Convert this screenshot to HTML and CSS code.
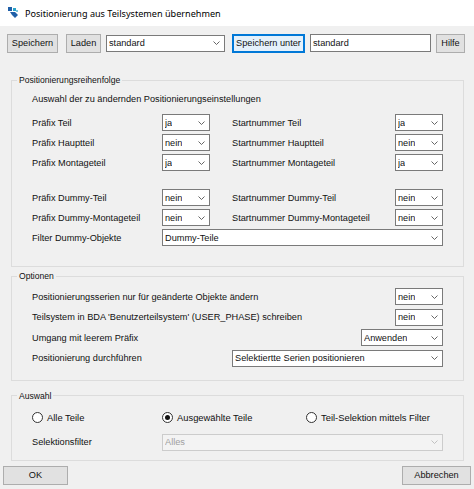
FILE: index.html
```html
<!DOCTYPE html>
<html lang="de">
<head>
<meta charset="utf-8">
<title>Positionierung aus Teilsystemen übernehmen</title>
<link rel="stylesheet" href="styles.css">
</head>
<body>
<div class="window">
  <div class="titlebar">
    <svg class="app-icon" width="11" height="11" viewBox="0 0 11 11">
      <rect x="0" y="0" width="4" height="4" fill="#1f5fa8"/>
      <rect x="5" y="1" width="3" height="3" fill="#2aa3c9"/>
      <path d="M2 5 L7 5 L10 8 L7 11 L4 8 Z" fill="#1f5fa8"/>
      <rect x="8" y="3" width="2" height="2" fill="#7cc6de"/>
    </svg>
    <span class="title">Positionierung aus Teilsystemen übernehmen</span>
  </div>

  <div class="toolbar">
    <button class="btn btn-save">Speichern</button>
    <button class="btn btn-load">Laden</button>
    <div class="combo combo-preset"><span>standard</span><svg class="chev" width="7" height="4" viewBox="0 0 7 4"><path d="M0.5 0.5 L3.5 3.5 L6.5 0.5" fill="none" stroke="#555" stroke-width="0.9"/></svg></div>
    <button class="btn btn-focus btn-saveas">Speichern unter</button>
    <div class="textbox">standard</div>
    <button class="btn btn-help">Hilfe</button>
  </div>

  <fieldset class="group group-order">
    <legend>Positionierungsreihenfolge</legend>
    <div class="group-body">
      <div class="intro">Auswahl der zu ändernden Positionierungseinstellungen</div>
      <div class="order-grid">
        <span class="lbl">Präfix Teil</span>
        <div class="combo"><span>ja</span><svg class="chev" width="7" height="4" viewBox="0 0 7 4"><path d="M0.5 0.5 L3.5 3.5 L6.5 0.5" fill="none" stroke="#555" stroke-width="0.9"/></svg></div>
        <span class="lbl lbl-2">Startnummer Teil</span>
        <div class="combo"><span>ja</span><svg class="chev" width="7" height="4" viewBox="0 0 7 4"><path d="M0.5 0.5 L3.5 3.5 L6.5 0.5" fill="none" stroke="#555" stroke-width="0.9"/></svg></div>

        <span class="lbl">Präfix Hauptteil</span>
        <div class="combo"><span>nein</span><svg class="chev" width="7" height="4" viewBox="0 0 7 4"><path d="M0.5 0.5 L3.5 3.5 L6.5 0.5" fill="none" stroke="#555" stroke-width="0.9"/></svg></div>
        <span class="lbl lbl-2">Startnummer Hauptteil</span>
        <div class="combo"><span>nein</span><svg class="chev" width="7" height="4" viewBox="0 0 7 4"><path d="M0.5 0.5 L3.5 3.5 L6.5 0.5" fill="none" stroke="#555" stroke-width="0.9"/></svg></div>

        <span class="lbl">Präfix Montageteil</span>
        <div class="combo"><span>ja</span><svg class="chev" width="7" height="4" viewBox="0 0 7 4"><path d="M0.5 0.5 L3.5 3.5 L6.5 0.5" fill="none" stroke="#555" stroke-width="0.9"/></svg></div>
        <span class="lbl lbl-2">Startnummer Montageteil</span>
        <div class="combo"><span>ja</span><svg class="chev" width="7" height="4" viewBox="0 0 7 4"><path d="M0.5 0.5 L3.5 3.5 L6.5 0.5" fill="none" stroke="#555" stroke-width="0.9"/></svg></div>

        <div class="spacer"></div>

        <span class="lbl">Präfix Dummy-Teil</span>
        <div class="combo"><span>nein</span><svg class="chev" width="7" height="4" viewBox="0 0 7 4"><path d="M0.5 0.5 L3.5 3.5 L6.5 0.5" fill="none" stroke="#555" stroke-width="0.9"/></svg></div>
        <span class="lbl lbl-2">Startnummer Dummy-Teil</span>
        <div class="combo"><span>nein</span><svg class="chev" width="7" height="4" viewBox="0 0 7 4"><path d="M0.5 0.5 L3.5 3.5 L6.5 0.5" fill="none" stroke="#555" stroke-width="0.9"/></svg></div>

        <span class="lbl">Präfix Dummy-Montageteil</span>
        <div class="combo"><span>nein</span><svg class="chev" width="7" height="4" viewBox="0 0 7 4"><path d="M0.5 0.5 L3.5 3.5 L6.5 0.5" fill="none" stroke="#555" stroke-width="0.9"/></svg></div>
        <span class="lbl lbl-2">Startnummer Dummy-Montageteil</span>
        <div class="combo"><span>nein</span><svg class="chev" width="7" height="4" viewBox="0 0 7 4"><path d="M0.5 0.5 L3.5 3.5 L6.5 0.5" fill="none" stroke="#555" stroke-width="0.9"/></svg></div>

        <span class="lbl">Filter Dummy-Objekte</span>
        <div class="combo combo-wide"><span>Dummy-Teile</span><svg class="chev" width="7" height="4" viewBox="0 0 7 4"><path d="M0.5 0.5 L3.5 3.5 L6.5 0.5" fill="none" stroke="#555" stroke-width="0.9"/></svg></div>
      </div>
    </div>
  </fieldset>

  <fieldset class="group group-options">
    <legend>Optionen</legend>
    <div class="group-body">
      <div class="options-grid">
        <span class="lbl">Positionierungsserien nur für geänderte Objekte ändern</span>
        <div class="combo combo-yn"><span>nein</span><svg class="chev" width="7" height="4" viewBox="0 0 7 4"><path d="M0.5 0.5 L3.5 3.5 L6.5 0.5" fill="none" stroke="#555" stroke-width="0.9"/></svg></div>

        <span class="lbl">Teilsystem in BDA 'Benutzerteilsystem' (USER_PHASE) schreiben</span>
        <div class="combo combo-yn"><span>nein</span><svg class="chev" width="7" height="4" viewBox="0 0 7 4"><path d="M0.5 0.5 L3.5 3.5 L6.5 0.5" fill="none" stroke="#555" stroke-width="0.9"/></svg></div>

        <span class="lbl">Umgang mit leerem Präfix</span>
        <div class="combo combo-apply"><span>Anwenden</span><svg class="chev" width="7" height="4" viewBox="0 0 7 4"><path d="M0.5 0.5 L3.5 3.5 L6.5 0.5" fill="none" stroke="#555" stroke-width="0.9"/></svg></div>

        <span class="lbl">Positionierung durchführen</span>
        <div class="combo combo-mode"><span>Selektiertte Serien positionieren</span><svg class="chev" width="7" height="4" viewBox="0 0 7 4"><path d="M0.5 0.5 L3.5 3.5 L6.5 0.5" fill="none" stroke="#555" stroke-width="0.9"/></svg></div>
      </div>
    </div>
  </fieldset>

  <fieldset class="group group-select">
    <legend>Auswahl</legend>
    <div class="group-body">
      <div class="radio-row">
        <label class="radio radio-all"><span class="dot"></span>Alle Teile</label>
        <label class="radio radio-sel"><span class="dot checked"></span>Ausgewählte Teile</label>
        <label class="radio"><span class="dot"></span>Teil-Selektion mittels Filter</label>
      </div>
      <div class="filter-row">
        <span class="lbl filter-lbl">Selektionsfilter</span>
        <div class="combo combo-disabled"><span>Alles</span><svg class="chev" width="7" height="4" viewBox="0 0 7 4"><path d="M0.5 0.5 L3.5 3.5 L6.5 0.5" fill="none" stroke="#bbb" stroke-width="0.9"/></svg></div>
      </div>
    </div>
  </fieldset>

  <div class="footer">
    <button class="btn btn-ok">OK</button>
    <button class="btn btn-cancel">Abbrechen</button>
  </div>
</div>
</body>
</html>
```

FILE: styles.css
```css
* {
  box-sizing: border-box;
}

html, body {
  margin: 0;
  padding: 0;
}

body {
  background: #f0f0f0;
  font-family: "Liberation Sans", Arial, sans-serif;
  font-size: 9.2px;
  color: #111;
}

.window {
  width: 474px;
  height: 489px;
  background: #f0f0f0;
  overflow: hidden;
}

/* title bar */
.titlebar {
  height: 26px;
  background: #fff;
  display: flex;
  align-items: center;
  padding-left: 8px;
  gap: 6px;
}

.app-icon {
  display: block;
  margin-top: -1px;
}

.title {
  font-family: "Noto Sans", "Open Sans", sans-serif;
  font-size: 9.1px;
  color: #000;
}

/* top toolbar */
.toolbar {
  display: flex;
  align-items: center;
  margin-top: 7px;
  padding-left: 7px;
  height: 20px;
}

.btn {
  font-family: "Liberation Sans", Arial, sans-serif;
  font-size: 9.2px;
  color: #111;
  background: #e1e1e1;
  border: 1px solid #adadad;
  height: 19px;
  padding: 0;
  margin: 0;
  text-align: center;
  line-height: 17px;
}

.btn-save { width: 51px; }
.btn-load { width: 35px; margin-left: 8px; }
.combo-preset { width: 119px; margin-left: 5px; height: 20px; }
.btn-saveas {
  width: 73px;
  margin-left: 7px;
}
.btn-focus {
  border: 2px solid #0078d7;
  background: #e5f1fb;
  line-height: 15px;
}
.textbox {
  width: 121px;
  height: 18px;
  margin-left: 5px;
  background: #fff;
  border: 1px solid #7a7a7a;
  padding-left: 2px;
  line-height: 16px;
}
.btn-help { width: 29px; margin-left: 5px; }

/* combo boxes */
.combo {
  height: 17px;
  background: #fff;
  border: 1px solid #7a7a7a;
  display: flex;
  align-items: center;
  justify-content: space-between;
  padding: 0 4px 0 2px;
  white-space: nowrap;
}

.combo span {
  overflow: hidden;
}

.chev {
  display: block;
  flex: none;
}

.combo-disabled {
  background: #f3f3f3;
  border-color: #cccccc;
  color: #a0a0a0;
}

/* group boxes */
.group {
  margin: 0 10px 0 11px;
  padding: 0;
  border: 1px solid #dcdcdc;
  min-width: 0;
}

.group legend {
  margin-left: 5px;
  padding: 0 2px;
  font-size: 8.6px;
  line-height: 10px;
  color: #111;
}

.group-body {
  padding: 0 20px;
}

.group-order {
  margin-top: 22px;
}

.group-order .group-body {
  padding-top: 8px;
  padding-bottom: 20px;
}

.intro {
  line-height: 12px;
}

.order-grid {
  display: grid;
  grid-template-columns: 130px 48px 185px 48px;
  row-gap: 3px;
  margin-top: 9px;
  align-items: center;
}

.lbl {
  white-space: nowrap;
}

.lbl-2 {
  padding-left: 22px;
}

.spacer {
  grid-column: 1 / -1;
  height: 12px;
}

.combo-wide {
  grid-column: 2 / 5;
}

/* options */
.group-options {
  margin-top: 4px;
}

.group-options .group-body {
  padding-top: 7px;
  padding-bottom: 13px;
}

.options-grid {
  display: grid;
  grid-template-columns: minmax(0, 1fr) auto;
  row-gap: 3.5px;
  align-items: center;
}

.options-grid .combo {
  justify-self: end;
}

.combo-yn { width: 48px; }
.combo-apply { width: 82px; }
.combo-mode { width: 211px; }

/* selection */
.group-select {
  margin-top: 10px;
}

.group-select .group-body {
  padding-top: 8px;
  padding-bottom: 9px;
}

.radio-row {
  display: flex;
  align-items: center;
  height: 17px;
}

.radio {
  display: flex;
  align-items: center;
  gap: 4px;
  font-size: 9.4px;
}

.radio-all { width: 130px; }
.radio-sel { width: 144px; }

.dot {
  width: 11px;
  height: 11px;
  border: 1px solid #333;
  border-radius: 50%;
  background: #fff;
  display: flex;
  align-items: center;
  justify-content: center;
}

.dot.checked::after {
  content: "";
  width: 5px;
  height: 5px;
  border-radius: 50%;
  background: #111;
}

.filter-row {
  display: flex;
  align-items: center;
  margin-top: 8px;
}

.filter-lbl {
  width: 130px;
}

.filter-row .combo {
  width: 281px;
}

/* dialog buttons */
.footer {
  display: flex;
  justify-content: space-between;
  margin-top: 5px;
  padding: 0 3px 0 3px;
}

.btn-ok { width: 65px; height: 19px; }
.btn-cancel { width: 69px; height: 19px; }
```
